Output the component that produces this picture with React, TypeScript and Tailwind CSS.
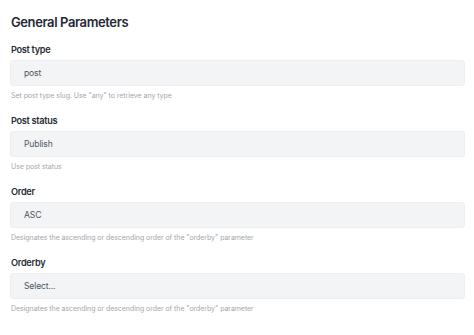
import React from "react";

const fields = [
  { label: "Post type", value: "post", help: 'Set post type slug. Use "any" to retrieve any type' },
  { label: "Post status", value: "Publish", help: "Use post status" },
  { label: "Order", value: "ASC", help: 'Designates the ascending or descending order of the "orderby" parameter' },
  { label: "Orderby", value: "Select...", help: 'Designates the ascending or descending order of the "orderby" parameter' },
];

export default function App() {
  return (
    <div className="w-[474px] h-[335px] bg-white pl-[10px] pr-[10px] pt-[14px]" style={{ fontFamily: "Inter, 'Noto Sans', sans-serif" }}>
      <h2 className="text-[13px] font-semibold text-[#1f2937] leading-[16px] tracking-[-0.4px] pl-[1px]">General Parameters</h2>
      <div className="flex flex-col gap-[14px] mt-[14px]">
        {fields.map((f) => (
          <div key={f.label} className="flex flex-col">
            <div className="text-[9.2px] font-semibold text-[#272d35] leading-[12px] tracking-[-0.3px] pl-[1px]">{f.label}</div>
            <div className="mt-[4px] h-[26px] w-[455px] rounded-[3px] bg-[#f3f4f6] border border-[#eceef1] flex items-center pl-[13px] text-[8.6px] tracking-[-0.15px] text-[#4f5660]">
              {f.value}
            </div>
            <div className="mt-[5px] text-[7px] text-[#a5a7aa] leading-[10px] tracking-[-0.05px] pl-[1px]">{f.help}</div>
          </div>
        ))}
      </div>
    </div>
  );
}
